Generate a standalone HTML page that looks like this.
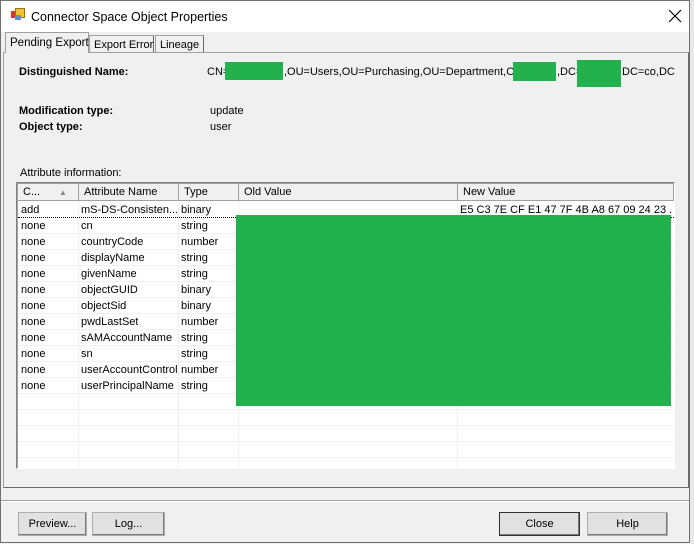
<!DOCTYPE html><html><head><style>
body{margin:0;width:694px;height:544px;overflow:hidden;background:#f0f0f0;font-family:"Liberation Sans",sans-serif;font-size:11px;color:#000;position:relative}
.a{position:absolute}
.t{position:absolute;white-space:nowrap;line-height:14px}
.g{position:absolute;background:#22b14c}
.btn{position:absolute;background:#e1e1e1;border:1px solid #adadad;box-shadow:inset -1px -1px #7a7a7a;text-align:center;line-height:22px;height:22px}
.hd{position:absolute;top:0;height:17px;line-height:17px;border-right:1px solid #a0a0a0;border-bottom:1px solid #a0a0a0;box-sizing:border-box;padding-left:5px;background:#f0f0f0}
.row{position:absolute;left:0;width:656px;height:16px;border-bottom:1px solid #f0f0f0;box-sizing:border-box}
.c{position:absolute;top:1px;line-height:14px;overflow:hidden;white-space:nowrap}
.vl{position:absolute;top:18px;bottom:0;width:1px;background:#f0f0f0}
</style></head><body>
<div class="a" style="left:690px;top:0;width:4px;height:544px;background:#e8e8e8"></div>
<div class="a" style="left:0;top:0;width:690px;height:543px;border:1px solid #707070;box-sizing:border-box;background:#f0f0f0"></div>
<div class="a" style="left:1px;top:1px;width:688px;height:31px;background:#fff"></div>
<div class="a" style="left:11px;top:11px;width:7px;height:7px;background:#d33;"></div>
<div class="a" style="left:15px;top:8px;width:8px;height:8px;background:#f4c430;border:1px solid #a07000"></div>
<div class="a" style="left:15px;top:15px;width:6px;height:5px;background:#5a8fd8"></div>
<div class="t" style="left:31px;top:10px;font-size:12.5px">Connector Space Object Properties</div>
<svg class="a" style="left:668px;top:9px" width="14" height="14"><path d="M1 1L13 13M13 1L1 13" stroke="#000" stroke-width="1.2"/></svg>
<!-- tabs -->
<div class="a" style="left:3px;top:52px;width:686px;height:436px;border:1px solid #a0a0a0;border-right-color:#696969;border-bottom-color:#696969;box-sizing:border-box"></div>
<div class="a" style="left:5px;top:32px;width:84px;height:21px;border:1px solid #a0a0a0;border-bottom:none;background:#f0f0f0;box-sizing:border-box"></div>
<div class="t" style="left:10px;top:36px;font-size:11.5px">Pending Export</div>
<div class="a" style="left:89px;top:35px;width:65px;height:17px;border:1px solid #a0a0a0;border-right-color:#696969;border-bottom:none;box-sizing:border-box"></div>
<div class="t" style="left:94px;top:38px">Export Error</div>
<div class="a" style="left:155px;top:35px;width:49px;height:17px;border:1px solid #a0a0a0;border-right-color:#696969;border-bottom:none;box-sizing:border-box"></div>
<div class="t" style="left:160px;top:38px">Lineage</div>
<div class="t" style="left:19px;top:65px;font-weight:bold">Distinguished Name:</div>
<div class="t" style="left:207px;top:65px">CN=</div>
<div class="t" style="left:284px;top:65px">,OU=Users,OU=Purchasing,OU=Department,OU</div>
<div class="t" style="left:557px;top:65px">,DC=</div>
<div class="t" style="left:622px;top:65px">DC=co,DC</div>
<div class="g" style="left:225px;top:62px;width:58px;height:18px"></div>
<div class="g" style="left:513px;top:62px;width:43px;height:19px"></div>
<div class="g" style="left:577px;top:60px;width:44px;height:27px"></div>
<div class="t" style="left:19px;top:104px;font-weight:bold">Modification type:</div>
<div class="t" style="left:210px;top:104px">update</div>
<div class="t" style="left:19px;top:120px;font-weight:bold">Object type:</div>
<div class="t" style="left:210px;top:120px">user</div>
<div class="t" style="left:20px;top:166px">Attribute information:</div>
<!-- table -->
<div class="a" style="left:16px;top:182px;width:659px;height:287px;border:1px solid #828282;border-right-color:#fff;border-bottom-color:#fff;box-sizing:border-box;background:#fff">
<div class="a" style="left:0;top:0;width:657px;height:285px;border-left:1px solid #a0a0a0;border-top:1px solid #a0a0a0;box-sizing:border-box"></div>
<div class="a" style="left:1px;top:1px;width:656px;height:284px;overflow:hidden">
<div class="vl" style="left:60px"></div><div class="vl" style="left:160px"></div><div class="vl" style="left:220px"></div><div class="vl" style="left:439px"></div>
<div class="hd" style="left:0;width:61px">C...<span style="position:absolute;left:41px;top:0;font-size:8px;color:#888">▲</span></div>
<div class="hd" style="left:61px;width:100px">Attribute Name</div>
<div class="hd" style="left:161px;width:60px">Type</div>
<div class="hd" style="left:221px;width:219px">Old Value</div>
<div class="hd" style="left:440px;width:216px">New Value</div>
<div class="row" style="top:18px;border-bottom:1px dotted #000"><span class="c" style="left:3px">add</span><span class="c" style="left:63px;width:96px">mS-DS-Consisten...</span><span class="c" style="left:163px">binary</span><span class="c" style="left:442px;width:212px">E5 C3 7E CF E1 47 7F 4B A8 67 09 24 23 ...</span></div>
<div class="row" style="top:34px"><span class="c" style="left:3px">none</span><span class="c" style="left:63px">cn</span><span class="c" style="left:163px">string</span></div>
<div class="row" style="top:50px"><span class="c" style="left:3px">none</span><span class="c" style="left:63px">countryCode</span><span class="c" style="left:163px">number</span></div>
<div class="row" style="top:66px"><span class="c" style="left:3px">none</span><span class="c" style="left:63px">displayName</span><span class="c" style="left:163px">string</span></div>
<div class="row" style="top:82px"><span class="c" style="left:3px">none</span><span class="c" style="left:63px">givenName</span><span class="c" style="left:163px">string</span></div>
<div class="row" style="top:98px"><span class="c" style="left:3px">none</span><span class="c" style="left:63px">objectGUID</span><span class="c" style="left:163px">binary</span></div>
<div class="row" style="top:114px"><span class="c" style="left:3px">none</span><span class="c" style="left:63px">objectSid</span><span class="c" style="left:163px">binary</span></div>
<div class="row" style="top:130px"><span class="c" style="left:3px">none</span><span class="c" style="left:63px">pwdLastSet</span><span class="c" style="left:163px">number</span></div>
<div class="row" style="top:146px"><span class="c" style="left:3px">none</span><span class="c" style="left:63px;width:96px">sAMAccountName</span><span class="c" style="left:163px">string</span></div>
<div class="row" style="top:162px"><span class="c" style="left:3px">none</span><span class="c" style="left:63px">sn</span><span class="c" style="left:163px">string</span></div>
<div class="row" style="top:178px"><span class="c" style="left:3px">none</span><span class="c" style="left:63px;width:96px">userAccountControl</span><span class="c" style="left:163px">number</span></div>
<div class="row" style="top:194px"><span class="c" style="left:3px">none</span><span class="c" style="left:63px;width:96px">userPrincipalName</span><span class="c" style="left:163px">string</span></div>
<div class="row" style="top:210px"></div><div class="row" style="top:226px"></div><div class="row" style="top:242px"></div><div class="row" style="top:258px"></div><div class="row" style="top:274px"></div>
</div></div>
<div class="g" style="left:236px;top:215px;width:435px;height:191px"></div>
<div class="a" style="left:1px;top:500px;width:688px;height:1px;background:#a0a0a0"></div>
<div class="a" style="left:1px;top:501px;width:688px;height:1px;background:#fff"></div>
<div class="btn" style="left:18px;top:512px;width:67px">Preview...</div>
<div class="btn" style="left:92px;top:512px;width:71px">Log...</div>
<div class="btn" style="left:499px;top:512px;width:79px;border-color:#333">Close</div>
<div class="btn" style="left:587px;top:512px;width:79px">Help</div>
</body></html>
